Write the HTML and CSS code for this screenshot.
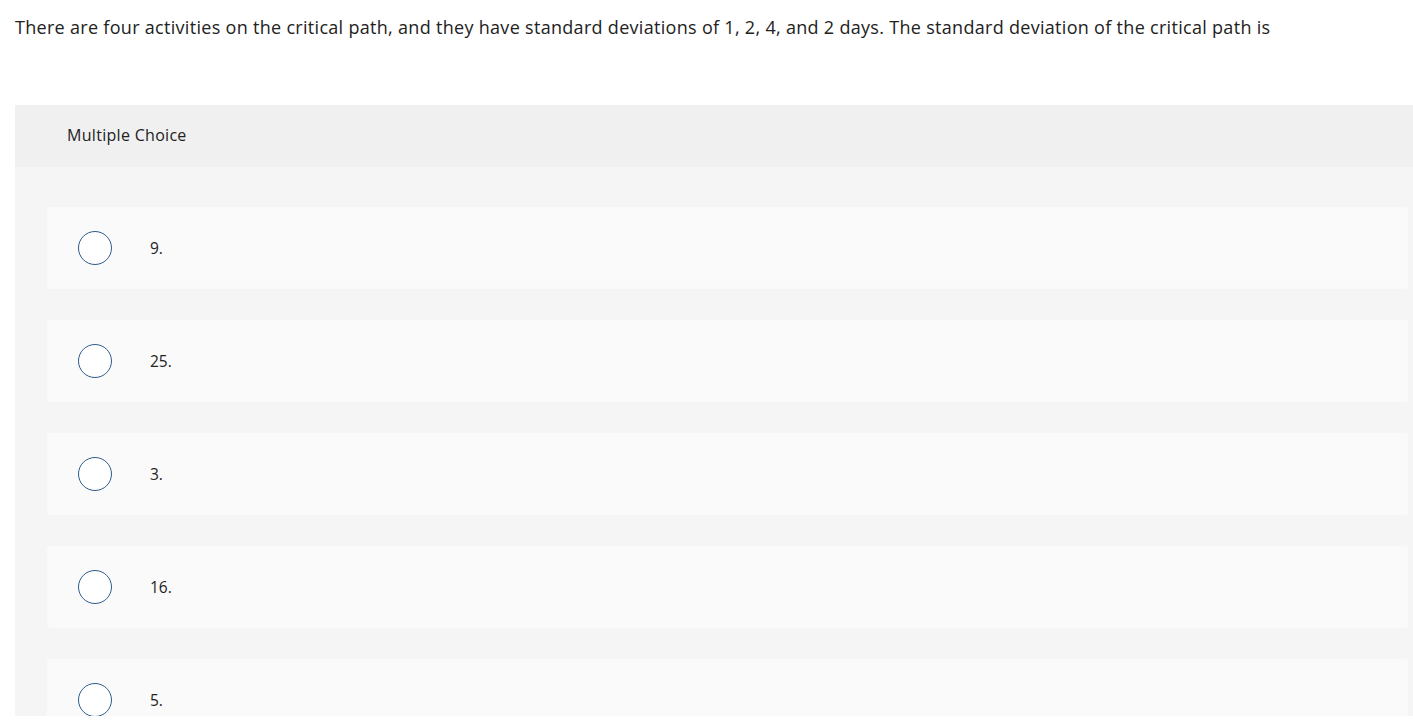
FILE: index.html
```html
<!DOCTYPE html>
<html>
<head>
<meta charset="utf-8">
<link rel="stylesheet" href="styles.css">
</head>
<body>
<div class="page">
  <p class="question">There are four activities on the critical path, and they have standard deviations of 1, 2, 4, and 2 days. The standard deviation of the critical path is</p>
  <section class="panel">
    <div class="panel-head">Multiple Choice</div>
    <div class="options">
      <div class="option"><span class="radio"></span><span class="label">9.</span></div>
      <div class="option"><span class="radio"></span><span class="label">25.</span></div>
      <div class="option"><span class="radio"></span><span class="label">3.</span></div>
      <div class="option"><span class="radio"></span><span class="label">16.</span></div>
      <div class="option"><span class="radio"></span><span class="label">5.</span></div>
    </div>
  </section>
</div>
</body>
</html>
```
FILE: styles.css
```css
html, body {
  margin: 0;
  padding: 0;
  overflow: hidden;
  background: #fff;
}
body {
  font-family: "Open Sans", "Liberation Sans", sans-serif;
  color: #1f1f1f;
}
.page {
  padding: 0 0 0 15px;
  height: 716px;
  overflow: hidden;
}
.question {
  margin: 0;
  padding-top: 15px;
  font-size: 18px;
  letter-spacing: 0.3px;
  line-height: 24px;
  height: 90px;
  white-space: nowrap;
  color: #222;
}
.panel {
  width: 1425px;
  background: #f5f5f5;
}
.panel-head {
  background: #f0f0f0;
  height: 62px;
  display: flex;
  align-items: center;
  padding-left: 52px;
  padding-bottom: 2px;
  box-sizing: border-box;
  font-size: 16px;
  letter-spacing: 0.3px;
  color: #222;
}
.options {
  display: flex;
  flex-direction: column;
  gap: 31px;
  padding: 40px 32px;
}
.option {
  height: 82px;
  background: #fafafa;
  border-radius: 4px;
  display: flex;
  align-items: center;
  padding-left: 31px;
}
.radio {
  width: 32px;
  height: 32px;
  border: 1.6px solid #2d5c8a;
  border-radius: 50%;
  background: #fff;
  flex: none;
}
.label {
  margin-left: 38px;
  font-size: 15.5px;
  color: #222;
}
```
